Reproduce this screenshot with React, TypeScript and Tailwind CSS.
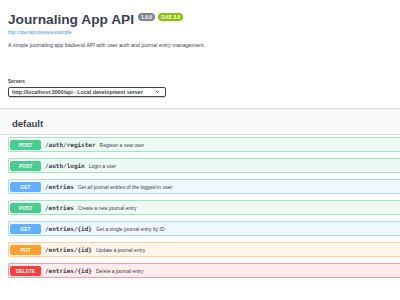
import React from "react";

type Op = { method: string; path: string; desc: string };

const ops: Op[] = [
  { method: "POST", path: "/auth/register", desc: "Register a new user" },
  { method: "POST", path: "/auth/login", desc: "Login a user" },
  { method: "GET", path: "/entries", desc: "Get all journal entries of the logged-in user" },
  { method: "POST", path: "/entries", desc: "Create a new journal entry" },
  { method: "GET", path: "/entries/{id}", desc: "Get a single journal entry by ID" },
  { method: "PUT", path: "/entries/{id}", desc: "Update a journal entry" },
  { method: "DELETE", path: "/entries/{id}", desc: "Delete a journal entry" },
];

const styles: Record<string, { row: string; badge: string }> = {
  POST: { row: "bg-[#edfaf4] border-[#a4e5c7]", badge: "bg-[#49cc90]" },
  GET: { row: "bg-[#eff7ff] border-[#b0d7fe]", badge: "bg-[#61affe]" },
  PUT: { row: "bg-[#fff5ea] border-[#fdd0a0]", badge: "bg-[#fca130]" },
  DELETE: { row: "bg-[#feebeb] border-[#fc9e9e]", badge: "bg-[#f93e3e]" },
};

function Row({ op }: { op: Op }) {
  const s = styles[op.method];
  return (
    <div
      className={`flex items-center h-[15px] w-[420px] border rounded-[2px] shadow-[0_0_1px_rgba(0,0,0,0.15)] ${s.row}`}
    >
      <div
        className={`ml-[1px] w-[31px] h-[10px] rounded-[2px] flex items-center justify-center text-white font-bold text-[5px] leading-[6px] ${s.badge}`}
      >
        {op.method}
      </div>
      <div
        className="ml-[4px] font-bold text-[6px] leading-[7px] text-[#3b4151]"
        style={{ fontFamily: '"DejaVu Sans Mono", "Liberation Mono", monospace' }}
      >
        {op.path}
      </div>
      <div className="ml-[4px] text-[5px] leading-[6px] text-[#3b4151]">{op.desc}</div>
    </div>
  );
}

export default function App() {
  return (
    <div
      className="w-[400px] h-[300px] overflow-hidden bg-white text-[#3b4151]"
      style={{ fontFamily: '"Liberation Sans", Arial, sans-serif' }}
    >
      <div className="bg-white pl-[8px] pt-[12px] h-[58px]">
        <div className="flex items-start">
          <div className="text-[13.7px] leading-[16px] font-bold text-[#3b4151]">Journaling App API</div>
          <div className="ml-[4px] mt-[1px] h-[8px] px-[3px] rounded-full bg-[#7d8492] text-white font-bold text-[5px] leading-[8px]">
            1.0.0
          </div>
          <div className="ml-[3px] mt-[1px] h-[8px] px-[3px] rounded-full bg-[#89bf04] text-white font-bold text-[5px] leading-[8px]">
            OAS 3.0
          </div>
        </div>
        <div className="mt-[2px] text-[4.6px] leading-[6px] text-[#4990e2]">http://openapi-preview.example</div>
        <div className="mt-[6px] text-[5.35px] leading-[6px] text-[#3b4151]">
          A simple journaling app backend API with user auth and journal entry management.
        </div>
      </div>
      <div className="bg-white h-[50px] pl-[8px] pt-[21px] shadow-[0_1px_1px_0_rgba(0,0,0,0.12)] relative">
        <div className="font-bold text-[4.6px] leading-[6px] text-[#3b4151]">Servers</div>
        <div className="mt-[2px] w-[158px] h-[9.5px] border-[1.5px] border-[#41444e] rounded-[2px] flex items-center pl-[3px] pr-[5px] shadow-[0_1px_1px_rgba(0,0,0,0.2)]">
          <span className="font-bold text-[5.3px] leading-[6px] text-[#3b4151]">
            http://localhost:3000/api - Local development server
          </span>
          <svg className="ml-auto" width="5" height="4" viewBox="0 0 10 8">
            <path d="M2 2 L5 5 L8 2" stroke="#3b4151" strokeWidth="1.6" fill="none" />
          </svg>
        </div>
      </div>
      <div className="h-[27px] bg-[#fafafa] border-b border-[#e0e1e4] flex items-end pl-[12px] pb-[5px]">
        <span className="font-bold text-[9.5px] leading-[11px] text-[#3b4151]">default</span>
      </div>
      <div className="pl-[8px] pt-[2px] flex flex-col gap-[6px]">
        {ops.map((op, i) => (
          <Row key={i} op={op} />
        ))}
      </div>
    </div>
  );
}
